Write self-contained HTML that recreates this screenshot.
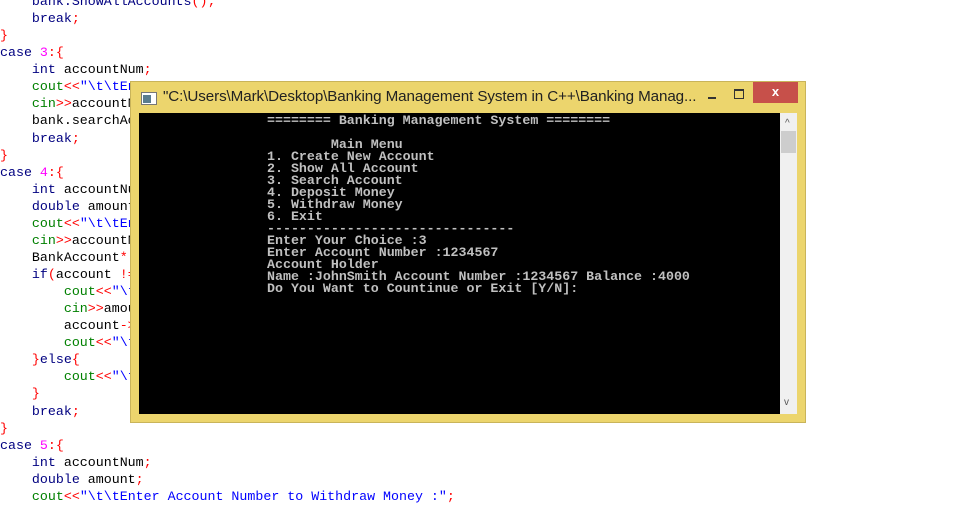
<!DOCTYPE html>
<html><head><style>
body{margin:0;width:964px;height:504px;overflow:hidden;background:#fff;position:relative;font-family:"Liberation Mono",monospace}
#code{position:absolute;left:0;top:-7px;font-size:13.3px;line-height:17.07px;white-space:pre;color:#000}
.k{color:#000080}.g{color:#008000}.r{color:#ff0000}.s{color:#0000ff}.n{color:#ff00ff}
#win{position:absolute;left:130px;top:81px;width:674px;height:340px;background:#ecd56d;border:1px solid #c9b45a}
#title{position:absolute;left:32px;top:6px;font-family:"Liberation Sans",sans-serif;font-size:15.2px;color:#222;white-space:nowrap;letter-spacing:-0.1px}
#con{position:absolute;left:8px;top:31px;width:641px;height:301px;background:#000}
#sb{position:absolute;left:649px;top:31px;width:17px;height:301px;background:#f0f0f0}
#txt{position:absolute;left:128px;top:2px;font-size:13.3px;line-height:12px;white-space:pre;color:#c0c0c0;font-weight:bold}
</style></head><body>
<div id="code"><span class="k">    bank.ShowAllAccounts</span><span class="r">();</span>
<span class="k">    break</span><span class="r">;</span>
<span class="r">}</span>
<span class="k">case</span> <span class="n">3</span><span class="r">:{</span>
<span class="k">    int</span> accountNum<span class="r">;</span>
<span class="g">    cout</span><span class="r">&lt;&lt;</span><span class="s">"\t\tEn</span>
<span class="g">    cin</span><span class="r">&gt;&gt;</span>accountNum<span class="r">;</span>
    bank.searchAccount<span class="r">(</span>accountNum<span class="r">);</span>
<span class="k">    break</span><span class="r">;</span>
<span class="r">}</span>
<span class="k">case</span> <span class="n">4</span><span class="r">:{</span>
<span class="k">    int</span> accountNum<span class="r">;</span>
<span class="k">    double</span> amount<span class="r">;</span>
<span class="g">    cout</span><span class="r">&lt;&lt;</span><span class="s">"\t\tEnter Account Number :"</span><span class="r">;</span>
<span class="g">    cin</span><span class="r">&gt;&gt;</span>accountNum<span class="r">;</span>
    BankAccount<span class="r">*</span> account <span class="r">=</span> bank.findAccount<span class="r">();</span>
<span class="k">    if</span><span class="r">(</span>account <span class="r">!=</span> NULL<span class="r">){</span>
<span class="g">        cout</span><span class="r">&lt;&lt;</span><span class="s">"\t\tEnter Amount :"</span><span class="r">;</span>
<span class="g">        cin</span><span class="r">&gt;&gt;</span>amount<span class="r">;</span>
        account<span class="r">-&gt;</span>deposit<span class="r">(</span>amount<span class="r">);</span>
<span class="g">        cout</span><span class="r">&lt;&lt;</span><span class="s">"\t\tDone"</span><span class="r">;</span>
<span class="r">    }</span><span class="k">else</span><span class="r">{</span>
<span class="g">        cout</span><span class="r">&lt;&lt;</span><span class="s">"\t\tNot found"</span><span class="r">;</span>
<span class="r">    }</span>
<span class="k">    break</span><span class="r">;</span>
<span class="r">}</span>
<span class="k">case</span> <span class="n">5</span><span class="r">:{</span>
<span class="k">    int</span> accountNum<span class="r">;</span>
<span class="k">    double</span> amount<span class="r">;</span>
<span class="g">    cout</span><span class="r">&lt;&lt;</span><span class="s">"\t\tEnter Account Number to Withdraw Money :"</span><span class="r">;</span></div>
<div id="win">
 <svg style="position:absolute;left:10px;top:10px" width="16" height="13"><rect x="0.5" y="0.5" width="15" height="12" fill="#fff" stroke="#777"/><rect x="2" y="3" width="8" height="8" fill="#5a7d8f"/></svg>
 <div id="title">"C:\Users\Mark\Desktop\Banking Management System in C++\Banking Manag...</div>
 <div style="position:absolute;left:577px;top:15px;width:8px;height:2px;background:#333"></div>
 <div style="position:absolute;left:603px;top:7px;width:8px;height:7px;border:1.5px solid #333;border-top-width:2.5px"></div>
 <div style="position:absolute;left:622px;top:0;width:45px;height:21px;background:#c7504a;color:#fff;font-family:'Liberation Sans',sans-serif;font-size:13px;font-weight:bold;text-align:center;line-height:20px">x</div>
 <div id="con"><div id="txt">======== Banking Management System ========

        Main Menu
1. Create New Account
2. Show All Account
3. Search Account
4. Deposit Money
5. Withdraw Money
6. Exit
-------------------------------
Enter Your Choice :3
Enter Account Number :1234567
Account Holder
Name :JohnSmith Account Number :1234567 Balance :4000
Do You Want to Countinue or Exit [Y/N]:</div></div>
 <div id="sb">
  <div style="position:absolute;left:5px;top:5px;font-size:10px;color:#555;font-family:'Liberation Sans',sans-serif">^</div>
  <div style="position:absolute;left:1px;top:18px;width:15px;height:22px;background:#cdcdcd"></div>
  <div style="position:absolute;left:4px;top:284px;font-size:10px;color:#555;font-family:'Liberation Sans',sans-serif">v</div>
 </div>
</div>
</body></html>
